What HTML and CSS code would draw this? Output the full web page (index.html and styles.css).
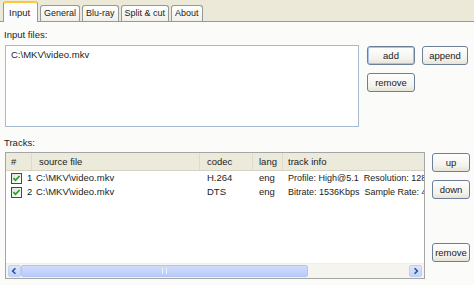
FILE: index.html
```html
<!DOCTYPE html>
<html>
<head>
<meta charset="utf-8">
<link rel="stylesheet" href="styles.css">
</head>
<body>
<div class="win">
  <div class="tabs">
    <div class="tab active">Input</div>
    <div class="tab">General</div>
    <div class="tab">Blu-ray</div>
    <div class="tab">Split &amp; cut</div>
    <div class="tab">About</div>
  </div>
  <div class="page">
    <div class="label files-label">Input files:</div>
    <div class="row">
      <div class="listbox"><div class="item">C:\MKV\video.mkv</div></div>
      <div class="btngrid">
        <button class="btn focus">add</button>
        <button class="btn wide">append</button>
        <button class="btn">remove</button>
      </div>
    </div>
    <div class="label tracks-label">Tracks:</div>
    <div class="row">
      <div class="table">
        <div class="trow thead">
          <div class="c c-num">#</div>
          <div class="c c-src">source file</div>
          <div class="c c-codec">codec</div>
          <div class="c c-lang">lang</div>
          <div class="c c-info">track info</div>
        </div>
        <div class="trow">
          <div class="c c-num"><span class="chk"><svg viewBox="0 0 11 11" width="11" height="11"><path d="M2.5 5.2 L4.5 7.3 L8.6 3" fill="none" stroke="#21a121" stroke-width="1.8"/></svg></span><span class="n">1</span></div>
          <div class="c c-src">C:\MKV\video.mkv</div>
          <div class="c c-codec">H.264</div>
          <div class="c c-lang">eng</div>
          <div class="c c-info">Profile: High@5.1&nbsp;&nbsp;Resolution: 128</div>
        </div>
        <div class="trow">
          <div class="c c-num"><span class="chk"><svg viewBox="0 0 11 11" width="11" height="11"><path d="M2.5 5.2 L4.5 7.3 L8.6 3" fill="none" stroke="#21a121" stroke-width="1.8"/></svg></span><span class="n">2</span></div>
          <div class="c c-src">C:\MKV\video.mkv</div>
          <div class="c c-codec">DTS</div>
          <div class="c c-lang">eng</div>
          <div class="c c-info">Bitrate: 1536Kbps&nbsp;&nbsp;Sample Rate: 4</div>
        </div>
        <div class="filler"></div>
        <div class="hscroll">
          <div class="sbtn"><svg viewBox="0 0 12 12" width="12" height="12"><path d="M7 3 L4 6 L7 9" fill="none" stroke="#3a4e9a" stroke-width="1.8"/></svg></div>
          <div class="thumb"><span class="grip"></span></div>
          <div class="track"></div>
          <div class="sbtn"><svg viewBox="0 0 12 12" width="12" height="12"><path d="M5 3 L8 6 L5 9" fill="none" stroke="#3a4e9a" stroke-width="1.8"/></svg></div>
        </div>
      </div>
      <div class="btncol">
        <button class="btn small">up</button>
        <button class="btn small">down</button>
        <div class="spacer"></div>
        <button class="btn small">remove</button>
      </div>
    </div>
  </div>
</div>
</body>
</html>
```

FILE: styles.css
```css
* { box-sizing: border-box; }
html, body { margin: 0; padding: 0; }
body {
  width: 474px;
  height: 285px;
  overflow: hidden;
  background: #fbfbf9;
  font-family: "Liberation Sans", Arial, sans-serif;
  font-size: 9.5px;
  color: #1c1c1c;
}
.win { display: flex; flex-direction: column; height: 285px; }

.tabs {
  height: 22px;
  flex: none;
  display: flex;
  align-items: flex-end;
  gap: 2px;
  padding-left: 3px;
  background: #ece9d8;
  border-bottom: 1px solid #919b9c;
  font-size: 9px;
}
.tab {
  height: 16px;
  padding: 0 3px;
  line-height: 15px;
  border: 1px solid #919b9c;
  border-bottom: none;
  border-radius: 3px 3px 0 0;
  background: linear-gradient(#ffffff, #f1efe6);
}
.tab.active {
  height: 21px;
  width: 35px;
  padding: 0 0 0 5px;
  line-height: 19px;
  font-size: 9.5px;
  background: #fcfcfe;
  border-top: 2px solid #ffc83c;
  margin-bottom: -1px;
}

.page {
  flex: 1;
  padding: 0 4px 0 5px;
  background: #fbfbf9;
}
.label { line-height: 12px; height: 12px; }
.files-label { margin-top: 7px; margin-left: -1px; }
.tracks-label { margin-top: 10px; margin-bottom: 3px; margin-left: -1px; }

.row { display: flex; align-items: flex-start; }
.files-label + .row { margin-top: 4px; }

.listbox {
  width: 354px;
  height: 82px;
  background: #fff;
  border: 1px solid #a5b9cf;
  padding: 3px 5px;
}
.item { line-height: 12px; }

.btngrid {
  margin-left: 8px;
  margin-top: 1px;
  display: grid;
  grid-template-columns: 48px 46px;
  column-gap: 7px;
  row-gap: 8px;
}
.btn {
  font: inherit;
  color: #1c1c1c;
  height: 19px;
  padding: 0;
  border: 1px solid #6d7f97;
  border-radius: 3px;
  background: linear-gradient(#ffffff, #f3f2ec 70%, #e6e3d6);
}
.btn.focus { box-shadow: inset 0 0 0 1px #a8c3ec; }

.table {
  width: 420px;
  height: 127px;
  border: 1px solid #a5a5a5;
  background: #fff;
  display: flex;
  flex-direction: column;
  overflow: hidden;
}
.trow {
  display: grid;
  grid-template-columns: 26px 168px 53px 30px 1fr;
  height: 14px;
  line-height: 14px;
  flex: none;
}
.thead {
  height: 18px;
  line-height: 17px;
  background: #ebeadb;
  border-bottom: 1px solid #d6d2c2;
}
.thead .c { border-right: 1px solid #dedbcd; padding-left: 7px; }
.thead .c-num { text-align: center; padding-left: 0; }
.thead .c-info { border-right: none; padding-left: 4px; }
.thead .c-lang { padding-left: 5px; }
.thead .c-codec { padding-left: 7px; }
.c { white-space: nowrap; overflow: hidden; }
.trow .c-codec { padding-left: 7px; }
.trow .c-lang { padding-left: 6px; }
.trow .c-info { padding-left: 5px; }
.trow:not(.thead) .c-info { font-size: 9px; }
.trow .c-num { display: flex; align-items: center; padding-left: 5px; }
.chk {
  width: 11px;
  height: 11px;
  flex: none;
  border: 1px solid #1c5180;
  background: linear-gradient(135deg, #e3e3db, #ffffff);
  display: flex;
}
.chk svg { margin: -1px; }
.n { margin-left: 5px; }
.trow:not(.thead) .c-src { padding-left: 5px; margin-left: -1px; }

.filler { flex: 1; }
.hscroll {
  height: 15px;
  flex: none;
  display: flex;
  align-items: stretch;
  background: #f5f4ef;
  padding: 1px 2px;
  border-top: 1px solid #eeeeea;
}
.sbtn {
  width: 13px;
  background: linear-gradient(#dce6fc, #c3d3fb);
  border: 1px solid #c0cff5;
  border-radius: 2px;
  display: flex;
  align-items: center;
  justify-content: center;
}
.thumb {
  width: 287px;
  background: linear-gradient(#cfdcfd, #b9cbf8);
  border: 1px solid #b2c5f2;
  border-radius: 2px;
  display: flex;
  align-items: center;
  justify-content: center;
}
.grip {
  width: 5px;
  height: 6px;
  border-left: 1px solid #eef2fe;
  border-right: 1px solid #eef2fe;
}
.track { flex: 1; }

.btncol {
  margin-left: 7px;
  margin-top: 1px;
  height: 109px;
  display: flex;
  flex-direction: column;
  gap: 8px;
}
.btn.small { width: 38px; }
.spacer { flex: 1; }
```
